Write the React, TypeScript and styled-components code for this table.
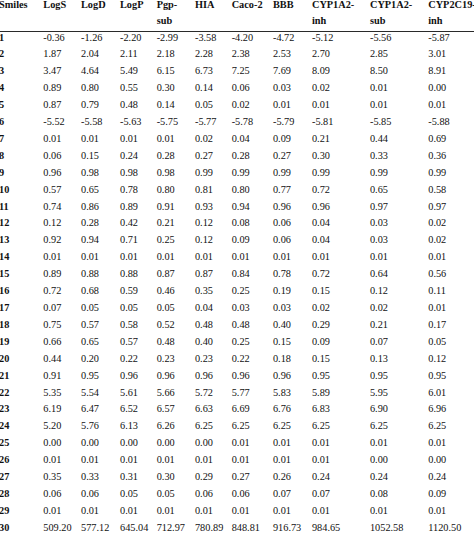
import React, { FC } from 'react'
import styled, { createGlobalStyle } from 'styled-components'

// 列定義（幅は参照画像から計測）
type Column = { id: string; lines: string[]; width: number }

const COLUMNS: Column[] = [
  { id: 'smiles', lines: ['Smiles'], width: 44.3 },
  { id: 'logs', lines: ['LogS'], width: 37.7 },
  { id: 'logd', lines: ['LogD'], width: 39 },
  { id: 'logp', lines: ['LogP'], width: 36.7 },
  { id: 'pgp', lines: ['Pgp-', 'sub'], width: 38.3 },
  { id: 'hia', lines: ['HIA'], width: 36.7 },
  { id: 'caco', lines: ['Caco-2'], width: 41.3 },
  { id: 'bbb', lines: ['BBB'], width: 39 },
  { id: 'cyp1a2inh', lines: ['CYP1A2-', 'inh'], width: 58 },
  { id: 'cyp1a2sub', lines: ['CYP1A2-', 'sub'], width: 58.3 },
  { id: 'cyp2c19inh', lines: ['CYP2C19-', 'inh'], width: 80 },
]

const ROWS: string[][] = [
  ['-0.36', '-1.26', '-2.20', '-2.99', '-3.58', '-4.20', '-4.72', '-5.12', '-5.56', '-5.87'],
  ['1.87', '2.04', '2.11', '2.18', '2.28', '2.38', '2.53', '2.70', '2.85', '3.01'],
  ['3.47', '4.64', '5.49', '6.15', '6.73', '7.25', '7.69', '8.09', '8.50', '8.91'],
  ['0.89', '0.80', '0.55', '0.30', '0.14', '0.06', '0.03', '0.02', '0.01', '0.00'],
  ['0.87', '0.79', '0.48', '0.14', '0.05', '0.02', '0.01', '0.01', '0.01', '0.01'],
  ['-5.52', '-5.58', '-5.63', '-5.75', '-5.77', '-5.78', '-5.79', '-5.81', '-5.85', '-5.88'],
  ['0.01', '0.01', '0.01', '0.01', '0.02', '0.04', '0.09', '0.21', '0.44', '0.69'],
  ['0.06', '0.15', '0.24', '0.28', '0.27', '0.28', '0.27', '0.30', '0.33', '0.36'],
  ['0.96', '0.98', '0.98', '0.98', '0.99', '0.99', '0.99', '0.99', '0.99', '0.99'],
  ['0.57', '0.65', '0.78', '0.80', '0.81', '0.80', '0.77', '0.72', '0.65', '0.58'],
  ['0.74', '0.86', '0.89', '0.91', '0.93', '0.94', '0.96', '0.96', '0.97', '0.97'],
  ['0.12', '0.28', '0.42', '0.21', '0.12', '0.08', '0.06', '0.04', '0.03', '0.02'],
  ['0.92', '0.94', '0.71', '0.25', '0.12', '0.09', '0.06', '0.04', '0.03', '0.02'],
  ['0.01', '0.01', '0.01', '0.01', '0.01', '0.01', '0.01', '0.01', '0.01', '0.01'],
  ['0.89', '0.88', '0.88', '0.87', '0.87', '0.84', '0.78', '0.72', '0.64', '0.56'],
  ['0.72', '0.68', '0.59', '0.46', '0.35', '0.25', '0.19', '0.15', '0.12', '0.11'],
  ['0.07', '0.05', '0.05', '0.05', '0.04', '0.03', '0.03', '0.02', '0.02', '0.01'],
  ['0.75', '0.57', '0.58', '0.52', '0.48', '0.48', '0.40', '0.29', '0.21', '0.17'],
  ['0.66', '0.65', '0.57', '0.48', '0.40', '0.25', '0.15', '0.09', '0.07', '0.05'],
  ['0.44', '0.20', '0.22', '0.23', '0.23', '0.22', '0.18', '0.15', '0.13', '0.12'],
  ['0.91', '0.95', '0.96', '0.96', '0.96', '0.96', '0.96', '0.95', '0.95', '0.95'],
  ['5.35', '5.54', '5.61', '5.66', '5.72', '5.77', '5.83', '5.89', '5.95', '6.01'],
  ['6.19', '6.47', '6.52', '6.57', '6.63', '6.69', '6.76', '6.83', '6.90', '6.96'],
  ['5.20', '5.76', '6.13', '6.26', '6.25', '6.25', '6.25', '6.25', '6.25', '6.25'],
  ['0.00', '0.00', '0.00', '0.00', '0.00', '0.01', '0.01', '0.01', '0.01', '0.01'],
  ['0.01', '0.01', '0.01', '0.01', '0.01', '0.01', '0.01', '0.01', '0.00', '0.00'],
  ['0.35', '0.33', '0.31', '0.30', '0.29', '0.27', '0.26', '0.24', '0.24', '0.24'],
  ['0.06', '0.06', '0.05', '0.05', '0.06', '0.06', '0.07', '0.07', '0.08', '0.09'],
  ['0.01', '0.01', '0.01', '0.01', '0.01', '0.01', '0.01', '0.01', '0.01', '0.01'],
  ['509.20', '577.12', '645.04', '712.97', '780.89', '848.81', '916.73', '984.65', '1052.58', '1120.50'],
]

const GlobalStyle = createGlobalStyle`
  html, body {
    margin: 0;
    padding: 0;
    background: #ffffff;
    overflow: hidden;
  }
  body {
    width: 474px;
    height: 535px;
  }
`

const Page = styled.div`
  width: 474px;
  height: 535px;
  overflow: hidden;
  background: #ffffff;
`

const STable = styled.table`
  border-collapse: collapse;
  table-layout: fixed;
  width: 509px;
  margin: -3px 0 0 -1px;
  font-family: 'Liberation Serif', 'Times New Roman', serif;
  font-size: 10.3px;
  color: #111111;
`

const STh = styled.th`
  padding: 0 0 2px 0;
  text-align: left;
  vertical-align: top;
  font-weight: bold;
  line-height: 16px;
  white-space: nowrap;
  border-bottom: 1px solid #2a2a2a;
`

const STr = styled.tr`
  height: 16.92px;
`

const STd = styled.td<{ $bold?: boolean }>`
  padding: 0;
  text-align: left;
  vertical-align: top;
  line-height: 11px;
  white-space: nowrap;
  font-weight: ${(p) => (p.$bold ? 'bold' : 'normal')};
`

export const PropertyTable: FC = () => (
  <STable>
    <colgroup>
      {COLUMNS.map((c) => (
        <col key={c.id} style={{ width: c.width }} />
      ))}
    </colgroup>
    <thead>
      <tr>
        {COLUMNS.map((c) => (
          <STh key={c.id}>
            {c.lines.map((line, i) => (
              <React.Fragment key={i}>
                {i > 0 && <br />}
                {line}
              </React.Fragment>
            ))}
          </STh>
        ))}
      </tr>
    </thead>
    <tbody>
      {ROWS.map((row, i) => (
        <STr key={i}>
          <STd $bold>{i + 1}</STd>
          {row.map((v, j) => (
            <STd key={j}>{v}</STd>
          ))}
        </STr>
      ))}
    </tbody>
  </STable>
)

const App: FC = () => (
  <Page>
    <GlobalStyle />
    <PropertyTable />
  </Page>
)

export default App
